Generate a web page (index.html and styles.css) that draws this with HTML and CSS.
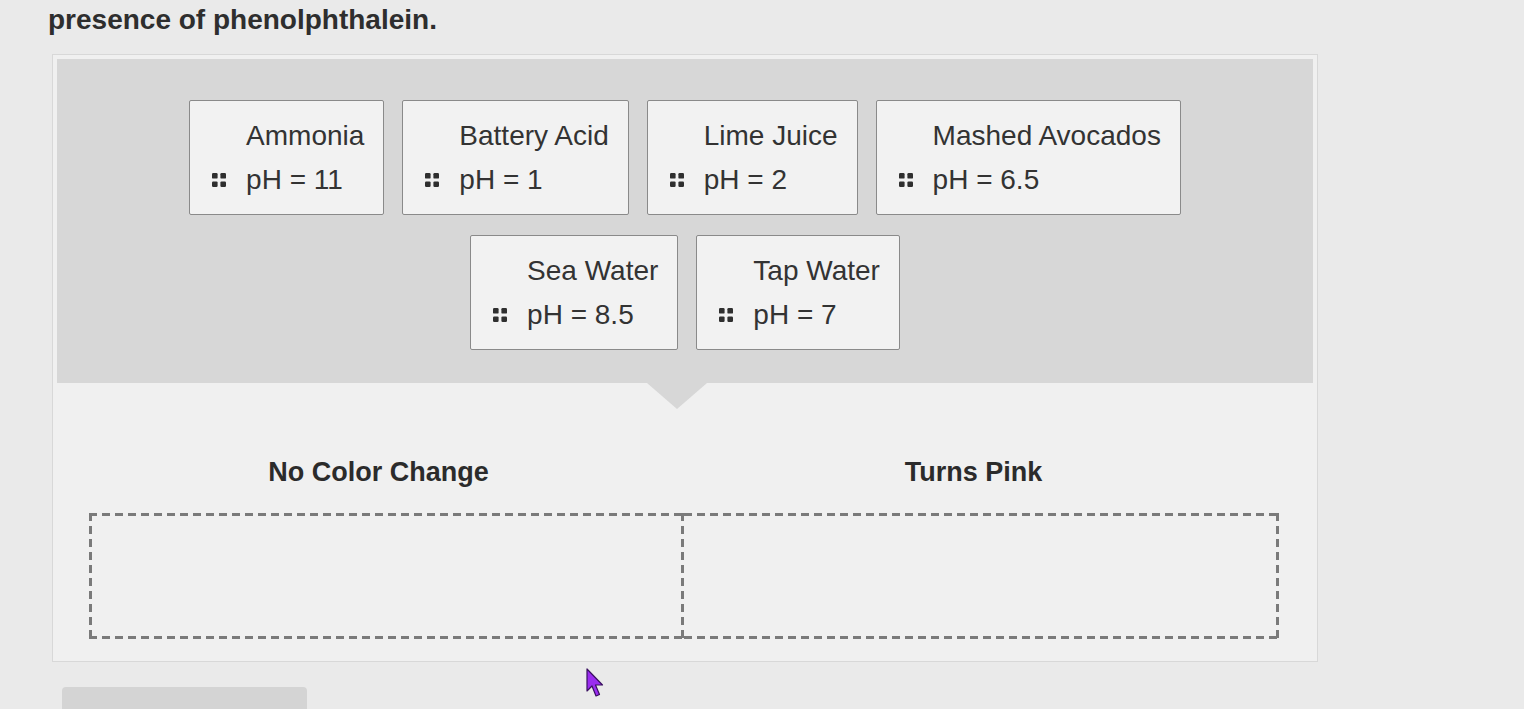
FILE: index.html
```html
<!DOCTYPE html>
<html lang="en">
<head>
<meta charset="utf-8">
<title>Phenolphthalein sort</title>
<link rel="stylesheet" href="styles.css">
</head>
<body>
<div class="page">
  <h1 class="prompt">presence of phenolphthalein.</h1>
  <div class="panel">
    <div class="source">
      <div class="cards">
        <div class="card"><svg class="handle" viewBox="0 0 14 14"><rect x="0" y="0" width="5.6" height="5.6" rx="1.2"/><rect x="8.4" y="0" width="5.6" height="5.6" rx="1.2"/><rect x="0" y="8.4" width="5.6" height="5.6" rx="1.2"/><rect x="8.4" y="8.4" width="5.6" height="5.6" rx="1.2"/></svg><div class="label"><span class="name">Ammonia</span><span class="ph">pH = 11</span></div></div>
        <div class="card"><svg class="handle" viewBox="0 0 14 14"><rect x="0" y="0" width="5.6" height="5.6" rx="1.2"/><rect x="8.4" y="0" width="5.6" height="5.6" rx="1.2"/><rect x="0" y="8.4" width="5.6" height="5.6" rx="1.2"/><rect x="8.4" y="8.4" width="5.6" height="5.6" rx="1.2"/></svg><div class="label"><span class="name">Battery Acid</span><span class="ph">pH = 1</span></div></div>
        <div class="card"><svg class="handle" viewBox="0 0 14 14"><rect x="0" y="0" width="5.6" height="5.6" rx="1.2"/><rect x="8.4" y="0" width="5.6" height="5.6" rx="1.2"/><rect x="0" y="8.4" width="5.6" height="5.6" rx="1.2"/><rect x="8.4" y="8.4" width="5.6" height="5.6" rx="1.2"/></svg><div class="label"><span class="name">Lime Juice</span><span class="ph">pH = 2</span></div></div>
        <div class="card"><svg class="handle" viewBox="0 0 14 14"><rect x="0" y="0" width="5.6" height="5.6" rx="1.2"/><rect x="8.4" y="0" width="5.6" height="5.6" rx="1.2"/><rect x="0" y="8.4" width="5.6" height="5.6" rx="1.2"/><rect x="8.4" y="8.4" width="5.6" height="5.6" rx="1.2"/></svg><div class="label"><span class="name">Mashed Avocados</span><span class="ph">pH = 6.5</span></div></div>
        <div class="card"><svg class="handle" viewBox="0 0 14 14"><rect x="0" y="0" width="5.6" height="5.6" rx="1.2"/><rect x="8.4" y="0" width="5.6" height="5.6" rx="1.2"/><rect x="0" y="8.4" width="5.6" height="5.6" rx="1.2"/><rect x="8.4" y="8.4" width="5.6" height="5.6" rx="1.2"/></svg><div class="label"><span class="name">Sea Water</span><span class="ph">pH = 8.5</span></div></div>
        <div class="card"><svg class="handle" viewBox="0 0 14 14"><rect x="0" y="0" width="5.6" height="5.6" rx="1.2"/><rect x="8.4" y="0" width="5.6" height="5.6" rx="1.2"/><rect x="0" y="8.4" width="5.6" height="5.6" rx="1.2"/><rect x="8.4" y="8.4" width="5.6" height="5.6" rx="1.2"/></svg><div class="label"><span class="name">Tap Water</span><span class="ph">pH = 7</span></div></div>
      </div>
    </div>
    <div class="targets">
      <div class="target-head">No Color Change</div>
      <div class="target-head">Turns Pink</div>
      <div class="dropzone"></div>
      <div class="dropzone second"></div>
    </div>
  </div>
  <div class="submit-btn"></div>
  <svg class="cursor" viewBox="0 0 20 30" width="20" height="30"><path d="M1 1 L1 23 L6 18 L10 28 L13.5 26.5 L9.5 17 L16.5 17 Z" fill="#9a2cf0" stroke="#3a1060" stroke-width="1.2" stroke-linejoin="round"/></svg>
</div>
</body>
</html>
```

FILE: styles.css
```css
html, body {
  margin: 0;
  padding: 0;
}
body {
  background: #eaeaea;
  font-family: "Liberation Sans", Arial, sans-serif;
  color: #333;
  overflow: hidden;
}
.page {
  position: relative;
  padding: 4px 0 0 48px;
  height: 705px;
}
.prompt {
  margin: 0;
  font-size: 28px;
  line-height: 32px;
  font-weight: bold;
  color: #2e2e2e;
}
.panel {
  margin: 18px 0 0 4px;
  width: 1266px;
  border: 1px solid #d8d8d8;
  background: #f0f0f0;
  padding: 4px 4px 0;
  box-sizing: border-box;
}
.source {
  position: relative;
  background: #d7d7d7;
  padding: 41px 0 33px;
}
.source::after {
  content: "";
  position: absolute;
  left: 50%;
  bottom: -26px;
  margin-left: -38px;
  border-top: 26px solid #d7d7d7;
  border-left: 30px solid transparent;
  border-right: 30px solid transparent;
}
.cards {
  max-width: 1080px;
  margin: 0 auto;
  display: flex;
  flex-wrap: wrap;
  justify-content: center;
  gap: 20px 18px;
}
.card {
  display: flex;
  align-items: flex-end;
  gap: 20px;
  padding: 13px 19px 12px 22px;
  background: #f2f2f2;
  border: 1.5px solid #8a8a8a;
  border-radius: 2px;
}
.handle {
  width: 14px;
  height: 14px;
  fill: #2f2f2f;
  margin-bottom: 15px;
  flex: none;
}
.label {
  display: flex;
  flex-direction: column;
  font-size: 28px;
  line-height: 44px;
  color: #333;
  white-space: nowrap;
}
.targets {
  display: grid;
  grid-template-columns: 1fr 1fr;
  margin: 0 34px 0 32px;
  padding: 74px 0 22px;
}
.target-head {
  text-align: center;
  font-size: 27px;
  font-weight: bold;
  line-height: 30px;
  color: #2b2b2b;
  margin-bottom: 26px;
  transform: translateX(-8px);
}
.dropzone {
  height: 126px;
  background:
    repeating-linear-gradient(90deg, #7a7a7a 0 8px, transparent 8px 13px) left top / 100% 3px no-repeat,
    repeating-linear-gradient(90deg, #7a7a7a 0 8px, transparent 8px 13px) left bottom / 100% 3px no-repeat,
    repeating-linear-gradient(180deg, #7a7a7a 0 8px, transparent 8px 13px) left top / 3px 100% no-repeat,
    repeating-linear-gradient(180deg, #7a7a7a 0 8px, transparent 8px 13px) right top / 3px 100% no-repeat;
}
.dropzone.second {
  background:
    repeating-linear-gradient(90deg, #7a7a7a 0 8px, transparent 8px 13px) left top / 100% 3px no-repeat,
    repeating-linear-gradient(90deg, #7a7a7a 0 8px, transparent 8px 13px) left bottom / 100% 3px no-repeat,
    repeating-linear-gradient(180deg, #7a7a7a 0 8px, transparent 8px 13px) right top / 3px 100% no-repeat;
}
.submit-btn {
  margin: 25px 0 0 14px;
  width: 245px;
  height: 40px;
  background: #d4d4d4;
  border-radius: 4px;
}
.cursor {
  position: absolute;
  left: 586px;
  top: 668px;
}
```
